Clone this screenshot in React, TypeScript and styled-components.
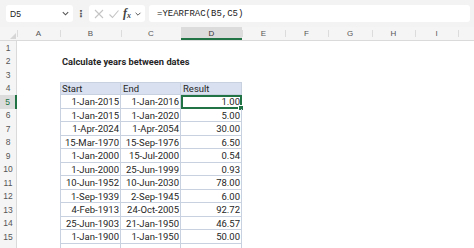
import React from 'react';
import styled, { createGlobalStyle, css } from 'styled-components';

const GREEN = '#217346';
const GRID_LINE = '#c8d1e0';
const COLS = '17px 43px 61px 60px 61px 43px 43px 44px 43px 43px 1fr';
const LETTERS = ['A', 'B', 'C', 'D', 'E', 'F', 'G', 'H', 'I', ''];

type Row = { start: string; end: string; result: string };

const rows: Row[] = [
  { start: '1-Jan-2015', end: '1-Jan-2016', result: '1.00' },
  { start: '1-Jan-2015', end: '1-Jan-2020', result: '5.00' },
  { start: '1-Apr-2024', end: '1-Apr-2054', result: '30.00' },
  { start: '15-Mar-1970', end: '15-Sep-1976', result: '6.50' },
  { start: '1-Jan-2000', end: '15-Jul-2000', result: '0.54' },
  { start: '1-Jun-2000', end: '25-Jun-1999', result: '0.93' },
  { start: '10-Jun-1952', end: '10-Jun-2030', result: '78.00' },
  { start: '1-Sep-1939', end: '2-Sep-1945', result: '6.00' },
  { start: '4-Feb-1913', end: '24-Oct-2005', result: '92.72' },
  { start: '25-Jun-1903', end: '21-Jan-1950', result: '46.57' },
  { start: '1-Jan-1900', end: '1-Jan-1950', result: '50.00' },
];

const GlobalStyle = createGlobalStyle`
  html, body {
    margin: 0;
    padding: 0;
    background: #ffffff;
    overflow: hidden;
  }
  body {
    font-family: "Roboto", "Liberation Sans", sans-serif;
    color: #262626;
  }
`;

const App = () => (
  <>
    <GlobalStyle />
    <Window>
      <FormulaBar>
        <NameBox>
          <span>D5</span>
          <Chevron />
        </NameBox>
        <Dots>⋮</Dots>
        <ActionBox>
          <svg width="12" height="12" viewBox="0 0 12 12">
            <path d="M2 2 L10 10 M10 2 L2 10" stroke="#c4c4c4" strokeWidth="1.1" fill="none" />
          </svg>
          <svg width="12" height="12" viewBox="0 0 12 12">
            <path d="M1.5 6.5 L4.5 9.5 L10.5 2.5" stroke="#c4c4c4" strokeWidth="1.1" fill="none" />
          </svg>
          <Fx>
            f<sub>x</sub>
          </Fx>
          <Chevron small />
        </ActionBox>
        <FormulaInput>=YEARFRAC(B5,C5)</FormulaInput>
      </FormulaBar>

      <Sheet>
        <HeaderRow>
          <Corner />
          {LETTERS.map((l, i) => (
            <ColHead key={`col-${i}`} $active={l === 'D'}>
              {l}
            </ColHead>
          ))}
        </HeaderRow>

        <GridRow>
          <RowHead>1</RowHead>
        </GridRow>
        <GridRow>
          <RowHead>2</RowHead>
          <Cell />
          <Title>Calculate years between dates</Title>
        </GridRow>
        <GridRow>
          <RowHead>3</RowHead>
        </GridRow>
        <GridRow>
          <RowHead>4</RowHead>
          <Cell />
          <Cell $table $first $top $head>Start</Cell>
          <Cell $table $top $head>End</Cell>
          <Cell $table $top $head>Result</Cell>
        </GridRow>
        {rows.map((r, idx) => (
          <GridRow key={`row-${idx}`}>
            <RowHead $active={idx === 0}>{idx + 5}</RowHead>
            <Cell />
            <Cell $table $first $right>
              {r.start}
            </Cell>
            <Cell $table $right>
              {r.end}
            </Cell>
            <Cell $table $right $selected={idx === 0}>
              {r.result}
              {idx === 0 && <FillHandle />}
            </Cell>
          </GridRow>
        ))}
        <GridRow>
          <RowHead />
          <Cell />
          <Cell $table $first />
          <Cell $table />
          <Cell $table />
        </GridRow>
      </Sheet>
    </Window>
  </>
);

const Chevron = ({ small }: { small?: boolean }) => (
  <svg width={small ? 8 : 9} height={small ? 8 : 9} viewBox="0 0 10 10">
    <path d="M2 3.5 L5 6.5 L8 3.5" stroke="#555" strokeWidth="1.2" fill="none" />
  </svg>
);

const Window = styled.div`
  width: 474px;
  height: 248px;
  overflow: hidden;
  display: flex;
  flex-direction: column;
  background: #ffffff;
`;

const FormulaBar = styled.div`
  height: 27px;
  flex: none;
  display: flex;
  align-items: center;
  padding: 0 4px 0 6px;
  background: #f3f3f3;
  box-sizing: border-box;
`;

const Box = styled.div`
  height: 17px;
  background: #ffffff;
  border-radius: 3px;
  box-sizing: border-box;
  display: flex;
  align-items: center;
`;

const NameBox = styled(Box)`
  width: 67px;
  padding: 0 3px 0 4px;
  justify-content: space-between;
  font-family: "Liberation Sans", Arial, sans-serif;
  font-size: 8.5px;
  color: #222;
`;

const Dots = styled.div`
  width: 16px;
  text-align: center;
  font-family: "DejaVu Sans", sans-serif;
  font-size: 10px;
  font-weight: bold;
  color: #555;
`;

const ActionBox = styled(Box)`
  width: 56px;
  padding: 0 2px 0 4px;
  gap: 3px;
`;

const Fx = styled.span`
  font-family: "Liberation Serif", serif;
  font-style: italic;
  font-weight: bold;
  font-size: 12px;
  color: #444;
  line-height: 1;
  sub {
    font-size: 8px;
    vertical-align: -1px;
  }
`;

const FormulaInput = styled(Box)`
  flex: 1;
  margin-left: 4px;
  padding-left: 8px;
  font-family: "Liberation Mono", monospace;
  font-size: 9px;
  color: #222;
`;

const Sheet = styled.div`
  display: flex;
  flex-direction: column;
`;

const HeaderRow = styled.div`
  display: grid;
  grid-template-columns: ${COLS};
  height: 13px;
  background: #f5f5f5;
  border-bottom: 1px solid #dadada;
`;

const Corner = styled.div`
  position: relative;
  &::after {
    content: '';
    position: absolute;
    right: 1px;
    bottom: 1px;
    border-style: solid;
    border-width: 0 0 6px 6px;
    border-color: transparent transparent #d6d6d6 transparent;
  }
`;

const ColHead = styled.div<{ $active?: boolean }>`
  display: flex;
  align-items: center;
  justify-content: center;
  font-family: "Liberation Sans", Arial, sans-serif;
  font-size: 8px;
  color: #555;
  position: relative;
  &::before {
    content: '';
    position: absolute;
    left: 0;
    top: 3px;
    bottom: 3px;
    border-left: 1px solid #dcdcdc;
  }
  ${({ $active }) =>
    $active &&
    css`
      background: #dcdcdc;
      color: #333;
      box-shadow: inset 0 -2px 0 ${GREEN};
    `}
`;

const GridRow = styled.div`
  display: grid;
  grid-template-columns: ${COLS};
  height: 13.5px;
  flex: none;
`;

const RowHead = styled.div<{ $active?: boolean }>`
  display: flex;
  align-items: center;
  justify-content: center;
  background: #f5f5f5;
  border-right: 1px solid #dadada;
  font-family: "Liberation Sans", Arial, sans-serif;
  font-size: 8.5px;
  color: #555;
  ${({ $active }) =>
    $active &&
    css`
      background: #dcdcdc;
      color: ${GREEN};
      border-right: 2px solid ${GREEN};
    `}
`;

const Cell = styled.div<{
  $table?: boolean;
  $first?: boolean;
  $top?: boolean;
  $head?: boolean;
  $right?: boolean;
  $selected?: boolean;
}>`
  position: relative;
  display: flex;
  align-items: center;
  padding: 0 2px;
  font-size: 9.5px;
  white-space: nowrap;
  ${({ $right }) => $right && 'justify-content: flex-end;'}
  ${({ $head }) => $head && 'background: #d9e1f0;'}
  ${({ $table, $first, $top, $selected }) => {
    if (!$table) return '';
    const shadows = [`inset -1px -1px 0 ${GRID_LINE}`];
    if ($first) shadows.push(`inset 1px 0 0 ${GRID_LINE}`);
    if ($top) shadows.push(`inset 0 1px 0 ${GRID_LINE}`);
    if ($selected) shadows.unshift(`inset 0 0 0 2px ${GREEN}`);
    return `box-shadow: ${shadows.join(', ')};`;
  }}
`;

const Title = styled.div`
  grid-column: span 3;
  display: flex;
  align-items: center;
  padding: 0 2px;
  font-size: 9.3px;
  font-weight: bold;
  white-space: nowrap;
`;

const FillHandle = styled.span`
  position: absolute;
  right: -2px;
  bottom: -2px;
  width: 4px;
  height: 4px;
  background: ${GREEN};
  border: 1px solid #ffffff;
`;

export default App;
